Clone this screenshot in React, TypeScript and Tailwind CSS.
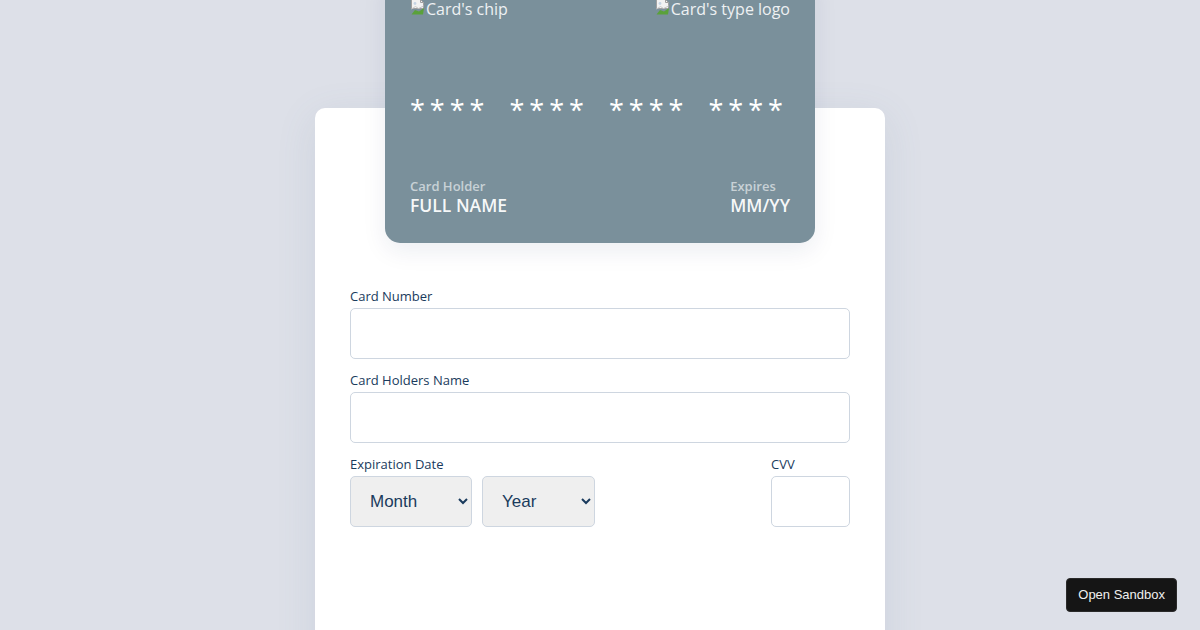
import React from "react";

function BrokenImg() {
  return (
    <svg width="16" height="16" viewBox="0 0 16 16" className="inline-block shrink-0 mt-[1px]">
      <path d="M1.5 0.5h9l3 3v6H1.5z" fill="#f2f2f2" stroke="#a0a0a0" strokeWidth="1" />
      <path d="M10.5 0.5v3h3" fill="none" stroke="#a0a0a0" strokeWidth="1" />
      <circle cx="5" cy="4.5" r="1.4" fill="#c5d4e4" />
      <path d="M1.5 15.5l3.5-4.5 4 1.5 5-3.5-1 6.5z" fill="#5aa13a" />
      <path d="M1.5 10l4-2.5 3 2 5-2.5" fill="none" stroke="#c9c9c9" strokeWidth="1" />
    </svg>
  );
}

function Field({ label, children }: { label: string; children: React.ReactNode }) {
  return (
    <div className="mb-[11px]">
      <label className="block text-[13px] leading-[21px] mb-[1px] text-[#1a3b5d]">{label}</label>
      {children}
    </div>
  );
}

export default function App() {
  const font = { fontFamily: '"Open Sans", "Noto Sans", sans-serif' };
  return (
    <div className="min-h-[630px] h-[630px] overflow-hidden bg-[#dde0e8] relative" style={font}>
      <div className="w-[570px] mx-auto mt-[-27px]">
        <div className="relative z-10 mx-auto w-[430px] h-[270px] rounded-[15px] bg-[#7a909b] shadow-[0_8px_24px_0_rgba(14,42,90,0.08)] p-[25px] flex flex-col text-white">
          <div className="flex justify-between items-start h-[24px] text-[16px] leading-[22px] text-[#eef1f3]">
            <div className="flex items-start">
              <BrokenImg />
              <span>Card's chip</span>
            </div>
            <div className="flex items-start">
              <BrokenImg />
              <span>Card's type logo</span>
            </div>
          </div>
          <div className="mt-[73px] flex gap-[20px] text-[27px] leading-[30px] text-white">
            <span className="tracking-[5px]">****</span>
            <span className="tracking-[5px]">****</span>
            <span className="tracking-[5px]">****</span>
            <span className="tracking-[5px]">****</span>
          </div>
          <div className="mt-auto mb-[1px] flex justify-between items-end">
            <div>
              <div className="text-[13px] leading-[14px] text-white/60 font-semibold">Card Holder</div>
              <div className="text-[17.5px] leading-[24px] font-semibold text-white/95">FULL NAME</div>
            </div>
            <div>
              <div className="text-[13px] leading-[14px] text-white/60 font-semibold">Expires</div>
              <div className="text-[17.5px] leading-[24px] font-semibold text-white/95">MM/YY</div>
            </div>
          </div>
        </div>
        <div className="mt-[-135px] bg-white rounded-[10px] shadow-[0_10px_40px_0_rgba(90,116,148,0.12)] px-[35px] pt-[178px] pb-[200px]">
          <Field label="Card Number">
            <input className="block w-full h-[51px] rounded-[5px] border border-[#ced6e0] bg-white px-[15px] outline-none" />
          </Field>
          <Field label="Card Holders Name">
            <input className="block w-full h-[51px] rounded-[5px] border border-[#ced6e0] bg-white px-[15px] outline-none" />
          </Field>
          <div className="flex justify-between">
            <div>
              <label className="block text-[13px] leading-[21px] mb-[1px] text-[#1a3b5d]">Expiration Date</label>
              <div className="flex gap-[10px]">
                <select
                  defaultValue=""
                  className="w-[122px] h-[51px] rounded-[5px] border border-[#ced6e0] bg-[#efefef] pl-[15px] pr-[4px] text-[17px] text-[#1a3b5d] outline-none"
                  style={{ fontFamily: '"Liberation Sans", Arial, sans-serif' }}
                >
                  <option value="" disabled>Month</option>
                </select>
                <select
                  defaultValue=""
                  className="w-[113px] h-[51px] rounded-[5px] border border-[#ced6e0] bg-[#efefef] pl-[15px] pr-[4px] text-[17px] text-[#1a3b5d] outline-none"
                  style={{ fontFamily: '"Liberation Sans", Arial, sans-serif' }}
                >
                  <option value="" disabled>Year</option>
                </select>
              </div>
            </div>
            <div className="w-[79px]">
              <label className="block text-[13px] leading-[21px] mb-[1px] text-[#1a3b5d]">CVV</label>
              <input className="block w-full h-[51px] rounded-[5px] border border-[#ced6e0] bg-white px-[10px] outline-none" />
            </div>
          </div>
        </div>
      </div>
      <button
        className="absolute right-[23px] bottom-[18px] h-[34px] px-[11px] rounded-[4px] bg-[#151515] border border-[#2a2a2a] text-[13px] text-[#f0f0f0]"
        style={{ fontFamily: '"Liberation Sans", Arial, sans-serif' }}
      >
        Open Sandbox
      </button>
    </div>
  );
}
